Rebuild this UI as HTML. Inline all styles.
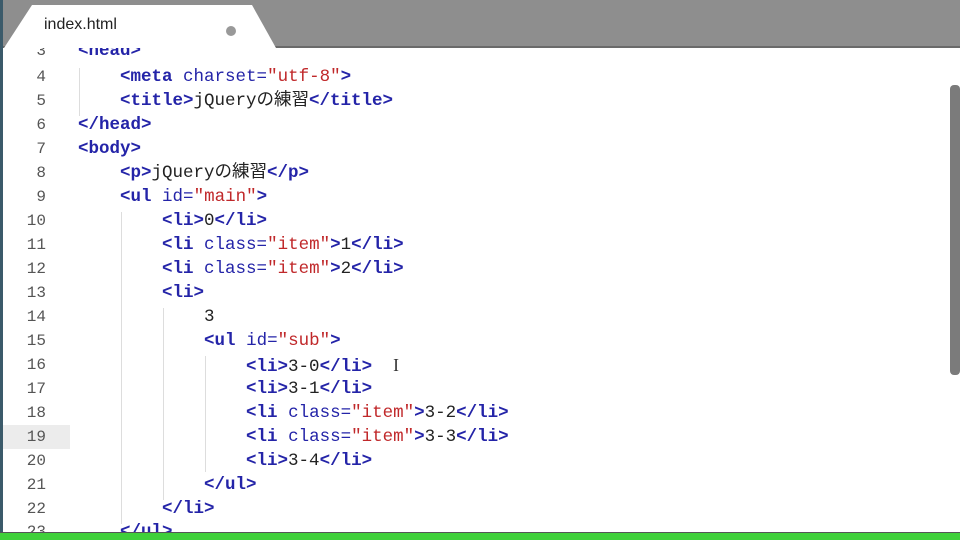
<!DOCTYPE html>
<html><head><meta charset="utf-8"><style>
html,body{margin:0;width:960px;height:540px;overflow:hidden;}
body{background:#fff;position:relative;font-family:"Liberation Mono","Noto Sans CJK JP",monospace;}
.top{position:absolute;left:0;top:0;width:960px;height:46px;background:#8e8e8e;border-bottom:2px solid #6a6a6a;z-index:5}
.tab{position:absolute;left:4px;top:5px;width:272px;height:43px;background:#fff;z-index:6;clip-path:polygon(28px 0,248px 0,272px 43px,0 43px)}
.tab span{position:absolute;left:40px;top:11px;font:16px "Liberation Sans",sans-serif;color:#222}
.dot{position:absolute;left:222px;top:21px;width:10px;height:10px;border-radius:50%;background:#999}
.left{position:absolute;left:0;top:0;width:3px;height:540px;background:#3b5a6a;z-index:7}
.green{position:fixed;left:0;top:532px;width:960px;height:8px;background:#3fd03a;border-top:1px solid #555;z-index:10}
.sb{position:absolute;left:950px;top:85px;width:10px;height:290px;background:#7b7b7b;border-radius:4px}
.hl{position:absolute;left:3px;top:425px;width:67px;height:24px;background:#ececec}
.ln{position:absolute;left:0;width:46px;text-align:right;font-size:16px;color:#555;line-height:24px}
.c{position:absolute;left:78px;font-size:17.5px;line-height:24px;white-space:pre;color:#222}
.t{color:#2424a8;font-weight:bold}.a{color:#2424a8}.s{color:#c0282a}
.g{position:absolute;width:1px;background:#ddd}
</style></head><body>
<div class="top"></div><div class="tab"><span>index.html</span><div class="dot"></div></div>
<div class="left"></div><div class="sb"></div><div class="hl"></div>
<div class="green"></div>
<div class="g" style="left:79px;top:68px;height:48px"></div>
<div class="g" style="left:121px;top:212px;height:312px"></div>
<div class="g" style="left:163px;top:308px;height:192px"></div>
<div class="g" style="left:205px;top:356px;height:116px"></div>
<div class="ln" style="top:39px">3</div><div class="c" style="top:39px"><span class="t">&lt;head&gt;</span></div>
<div class="ln" style="top:65px">4</div><div class="c" style="top:65px">    <span class="t">&lt;meta</span> <span class="a">charset=</span><span class="s">"utf-8"</span><span class="t">&gt;</span></div>
<div class="ln" style="top:89px">5</div><div class="c" style="top:89px">    <span class="t">&lt;title&gt;</span>jQueryの練習<span class="t">&lt;/title&gt;</span></div>
<div class="ln" style="top:113px">6</div><div class="c" style="top:113px"><span class="t">&lt;/head&gt;</span></div>
<div class="ln" style="top:137px">7</div><div class="c" style="top:137px"><span class="t">&lt;body&gt;</span></div>
<div class="ln" style="top:161px">8</div><div class="c" style="top:161px">    <span class="t">&lt;p&gt;</span>jQueryの練習<span class="t">&lt;/p&gt;</span></div>
<div class="ln" style="top:185px">9</div><div class="c" style="top:185px">    <span class="t">&lt;ul</span> <span class="a">id=</span><span class="s">"main"</span><span class="t">&gt;</span></div>
<div class="ln" style="top:209px">10</div><div class="c" style="top:209px">        <span class="t">&lt;li&gt;</span>0<span class="t">&lt;/li&gt;</span></div>
<div class="ln" style="top:233px">11</div><div class="c" style="top:233px">        <span class="t">&lt;li</span> <span class="a">class=</span><span class="s">"item"</span><span class="t">&gt;</span>1<span class="t">&lt;/li&gt;</span></div>
<div class="ln" style="top:257px">12</div><div class="c" style="top:257px">        <span class="t">&lt;li</span> <span class="a">class=</span><span class="s">"item"</span><span class="t">&gt;</span>2<span class="t">&lt;/li&gt;</span></div>
<div class="ln" style="top:281px">13</div><div class="c" style="top:281px">        <span class="t">&lt;li&gt;</span></div>
<div class="ln" style="top:305px">14</div><div class="c" style="top:305px">            3</div>
<div class="ln" style="top:329px">15</div><div class="c" style="top:329px">            <span class="t">&lt;ul</span> <span class="a">id=</span><span class="s">"sub"</span><span class="t">&gt;</span></div>
<div class="ln" style="top:353px">16</div><div class="c" style="top:353px">                <span class="t">&lt;li&gt;</span>3-0<span class="t">&lt;/li&gt;</span>  <span style="font-family:'Liberation Serif';color:#333">I</span></div>
<div class="ln" style="top:377px">17</div><div class="c" style="top:377px">                <span class="t">&lt;li&gt;</span>3-1<span class="t">&lt;/li&gt;</span></div>
<div class="ln" style="top:401px">18</div><div class="c" style="top:401px">                <span class="t">&lt;li</span> <span class="a">class=</span><span class="s">"item"</span><span class="t">&gt;</span>3-2<span class="t">&lt;/li&gt;</span></div>
<div class="ln" style="top:425px">19</div><div class="c" style="top:425px">                <span class="t">&lt;li</span> <span class="a">class=</span><span class="s">"item"</span><span class="t">&gt;</span>3-3<span class="t">&lt;/li&gt;</span></div>
<div class="ln" style="top:449px">20</div><div class="c" style="top:449px">                <span class="t">&lt;li&gt;</span>3-4<span class="t">&lt;/li&gt;</span></div>
<div class="ln" style="top:473px">21</div><div class="c" style="top:473px">            <span class="t">&lt;/ul&gt;</span></div>
<div class="ln" style="top:497px">22</div><div class="c" style="top:497px">        <span class="t">&lt;/li&gt;</span></div>
<div class="ln" style="top:520px">23</div><div class="c" style="top:520px">    <span class="t">&lt;/ul&gt;</span></div>
</body></html>
